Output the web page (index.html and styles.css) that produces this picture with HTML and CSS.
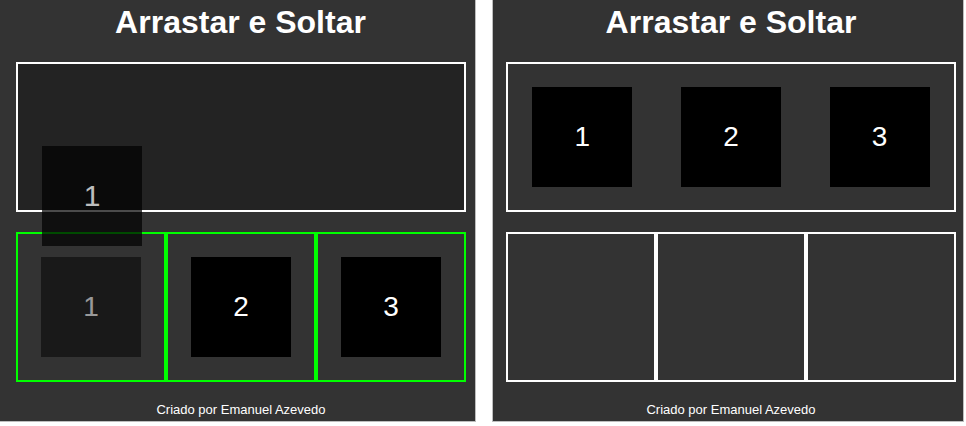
FILE: index.html
```html
<!DOCTYPE html>
<html lang="pt">
<head>
<meta charset="utf-8">
<title>Arrastar e Soltar</title>
<link rel="stylesheet" href="styles.css">
</head>
<body>
  <section class="panel panel-left">
    <h1 class="title">Arrastar e Soltar</h1>
    <div class="zone-top zone-over"></div>
    <div class="slots">
      <div class="slot slot-over"><div class="item item-dragging">1</div></div>
      <div class="slot slot-over"><div class="item">2</div></div>
      <div class="slot slot-over"><div class="item">3</div></div>
    </div>
    <p class="footer">Criado por Emanuel Azevedo</p>
    <div class="ghost">1</div>
  </section>
  <section class="panel panel-right">
    <h1 class="title">Arrastar e Soltar</h1>
    <div class="zone-top zone-filled">
      <div class="item">1</div>
      <div class="item">2</div>
      <div class="item">3</div>
    </div>
    <div class="slots">
      <div class="slot"></div>
      <div class="slot"></div>
      <div class="slot"></div>
    </div>
    <p class="footer">Criado por Emanuel Azevedo</p>
  </section>
</body>
</html>
```

FILE: styles.css
```css
* {
  box-sizing: border-box;
}

html, body {
  margin: 0;
  padding: 0;
  background: #ffffff;
}

body {
  display: flex;
  align-items: flex-start;
  gap: 16px;
  width: 966px;
  height: 426px;
  overflow: hidden;
  font-family: "Liberation Sans", Arial, sans-serif;
  color: #ffffff;
}

.panel {
  position: relative;
  display: flex;
  flex-direction: column;
  height: 422px;
  background: #333333;
  border-bottom: 1px solid #bdbdbd;
  padding-top: 4px;
  padding-bottom: 4px;
}

.panel-left {
  width: 476px;
  padding-left: 16px;
  padding-right: 10px;
  border-right: 1px solid #bdbdbd;
}

.panel-right {
  width: 472px;
  padding-left: 13px;
  padding-right: 7px;
  border-left: 1px solid #bdbdbd;
  border-right: 1px solid #bdbdbd;
}

.title {
  margin: 0 0 21px;
  font-size: 32px;
  line-height: 37px;
  font-weight: bold;
  text-align: center;
}

.zone-top {
  width: 450px;
  height: 150px;
  border: 2px solid #ffffff;
}

.zone-over {
  background: #232323;
}

.zone-filled {
  display: flex;
  justify-content: space-around;
  align-items: center;
}

.slots {
  display: flex;
  margin-top: 20px;
  width: 450px;
}

.slot {
  width: 150px;
  height: 150px;
  border: 2px solid #ffffff;
  display: flex;
  justify-content: center;
  align-items: center;
}

.slot-over {
  border-color: #00ff00;
}

.item {
  width: 100px;
  height: 100px;
  background: #000000;
  color: #ffffff;
  font-size: 28px;
  display: flex;
  justify-content: center;
  align-items: center;
}

.item-dragging {
  opacity: 0.5;
}

.footer {
  margin: 20px 0 0;
  width: 450px;
  font-size: 13px;
  line-height: 15px;
  text-align: center;
}

.ghost {
  position: absolute;
  left: 42px;
  top: 146px;
  width: 100px;
  height: 100px;
  background: #000000;
  color: #ffffff;
  font-size: 30px;
  opacity: 0.7;
  display: flex;
  justify-content: center;
  align-items: center;
}
```
